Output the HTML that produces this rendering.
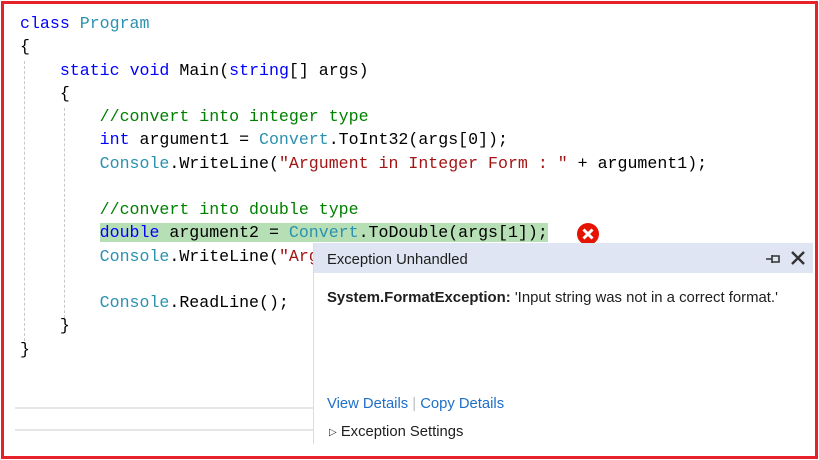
<!DOCTYPE html>
<html><head><style>
html,body{margin:0;padding:0;}
body{width:819px;height:460px;position:relative;overflow:hidden;background:#fff;font-family:"Liberation Sans",sans-serif;}
.frame{position:absolute;left:1px;top:1px;width:811px;height:452px;border:3px solid #e8202a;}
.code{position:absolute;left:20px;top:12px;font-family:"Liberation Mono",monospace;font-size:16.6px;line-height:23.25px;white-space:pre;color:#000;}
.k{color:#0000ff}.t{color:#2b91af}.c{color:#008000}.s{color:#a31515}
.hl{background:#b7dfb5;}
.guide{position:absolute;width:0;border-left:1px dashed #c8c8c8;}
.pop{position:absolute;left:313px;top:243px;width:499px;height:201px;background:#fff;border-left:1px solid #dcdcdc;}
.hdr{height:30px;background:#dfe5f2;font-size:14.8px;line-height:34px;padding-left:13px;color:#1e1e1e;}
.msg{position:absolute;left:13px;top:47px;font-size:14.9px;color:#1e1e1e;}
.links{position:absolute;left:13px;top:153px;font-size:14.8px;color:#1e6fc7;}
.sett{position:absolute;left:15px;top:181px;font-size:14.8px;color:#1e1e1e;}
.gl{position:absolute;left:15px;width:298px;height:2px;background:#e6e6e6;}
</style></head><body>
<div class="guide" style="left:24px;top:61px;height:280px"></div>
<div class="guide" style="left:64px;top:108px;height:210px"></div>
<div class="code"><span class="k">class</span> <span class="t">Program</span>
{
    <span class="k">static</span> <span class="k">void</span> Main(<span class="k">string</span>[] args)
    {
        <span class="c">//convert into integer type</span>
        <span class="k">int</span> argument1 = <span class="t">Convert</span>.ToInt32(args[0]);
        <span class="t">Console</span>.WriteLine(<span class="s">"Argument in Integer Form : "</span> + argument1);

        <span class="c">//convert into double type</span>
        <span class="hl"><span class="k">double</span> argument2 = <span class="t">Convert</span>.ToDouble(args[1]);</span>
        <span class="t">Console</span>.WriteLine(<span class="s">"Argument in Double Form : "</span> + argument2);

        <span class="t">Console</span>.ReadLine();
    }
}</div>
<svg style="position:absolute;left:576px;top:222px" width="24" height="24" viewBox="0 0 24 24"><circle cx="12" cy="12" r="11" fill="#e51400"/><path d="M7.5 7.5L16.5 16.5M16.5 7.5L7.5 16.5" stroke="#fff" stroke-width="3"/></svg>
<div class="gl" style="top:407px"></div>
<div class="gl" style="top:429px"></div>
<div class="pop">
<div class="hdr">Exception Unhandled</div>
<svg style="position:absolute;left:451px;top:9px" width="16" height="14" viewBox="0 0 16 14"><path d="M1 7H7M7 3V11M7 4H14V10H7" stroke="#333" stroke-width="1.6" fill="none"/></svg>
<svg style="position:absolute;left:477px;top:8px" width="14" height="14" viewBox="0 0 14 14"><path d="M1 1L13 13M13 1L1 13" stroke="#333" stroke-width="2.4"/></svg>
<div class="msg"><b>System.FormatException:</b> 'Input string was not in a correct format.'</div>
<div class="links">View Details <span style="color:#bbb">|</span> Copy Details</div>
<div class="sett"><span style="font-size:10px;vertical-align:1px">&#9655;</span> Exception Settings</div>
</div>
<div class="frame"></div>
</body></html>
